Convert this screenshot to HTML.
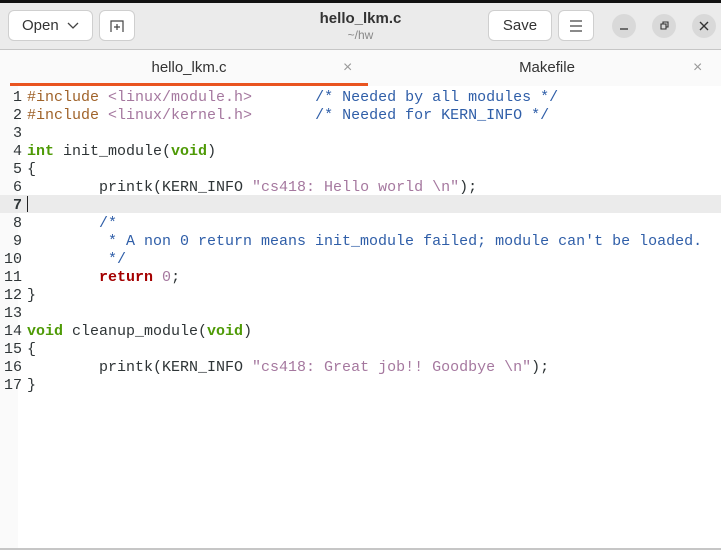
<!DOCTYPE html>
<html><head><style>
body{margin:0;width:721px;height:550px;overflow:hidden;background:#fff;font-family:"Liberation Sans",sans-serif;position:relative}
.top{position:absolute;left:0;top:0;width:721px;height:3px;background:#111}
.hdr{position:absolute;left:0;top:3px;width:721px;height:46px;background:#ebebeb;border-bottom:1px solid #c6c6c6}
.btn{position:absolute;top:7px;height:31px;background:#fff;border:1px solid #cfcfcf;border-radius:6px;box-sizing:border-box;font-size:15px;color:#333;display:flex;align-items:center;justify-content:center}
.circ{position:absolute;top:11px;width:24px;height:24px;border-radius:50%;background:#d9d9d9;display:flex;align-items:center;justify-content:center;color:#333;font-size:13px}
.tabs{position:absolute;left:0;top:50px;width:721px;height:36px;background:#fafafa}
.tab{position:absolute;top:0;height:36px;line-height:36px;font-size:15px;color:#333;text-align:center}
.x{position:absolute;top:0;line-height:36px;color:#999;font-size:16px}
.gut{position:absolute;left:0;top:86px;width:18px;height:463px;background:#fafafa}
.hl{position:absolute;left:0;top:195px;width:721px;height:18px;background:#ebebeb}
.code{position:absolute;left:0;top:89px;font-family:"Liberation Mono",monospace;font-size:15px;line-height:18px;color:#2e3436;white-space:pre}
.ln{display:inline-block;width:22px;text-align:right;margin-right:5px}
.pp{color:#a0632a}.s{color:#a5789f}.c{color:#2f5ea8}.t{color:#4e9a06;font-weight:bold}.k{color:#a40000;font-weight:bold}
.bot{position:absolute;left:0;top:548px;width:721px;height:2px;background:#c6c6c6}
</style></head><body>
<div class="top"></div>
<div class="hdr">
<div class="btn" style="left:8px;width:85px">Open&nbsp;&nbsp;<svg width="12" height="8"><path d="M1 1l5 5 5-5" fill="none" stroke="#444" stroke-width="1.3"/></svg></div>
<div class="btn" style="left:99px;width:36px"><svg width="16" height="14"><path d="M2 13V2h12v11M8 5v6M5 8h6" fill="none" stroke="#444" stroke-width="1.2"/></svg></div>
<div style="position:absolute;left:0;width:721px;top:7px;text-align:center;font-size:15px;font-weight:bold;color:#333">hello_lkm.c</div>
<div style="position:absolute;left:0;width:721px;top:25px;text-align:center;font-size:12px;color:#888">~/hw</div>
<div class="btn" style="left:488px;width:64px">Save</div>
<div class="btn" style="left:558px;width:36px"><svg width="14" height="12"><path d="M1 1h12M1 6h12M1 11h12" stroke="#444" stroke-width="1.2"/></svg></div>
<div class="circ" style="left:612px"><svg width="10" height="10"><path d="M1 8h8" stroke="#333" stroke-width="1.3"/></svg></div>
<div class="circ" style="left:652px"><svg width="10" height="10"><path d="M2 3h5v5H2zM4 3V1h5v5H7" fill="none" stroke="#333" stroke-width="1.1"/></svg></div>
<div class="circ" style="left:692px"><svg width="10" height="10"><path d="M1 1l8 8M9 1l-8 8" stroke="#333" stroke-width="1.4"/></svg></div>
</div>
<div class="tabs">
<div class="tab" style="left:10px;width:358px">hello_lkm.c</div>
<div class="x" style="left:343px">×</div>
<div style="position:absolute;left:10px;top:33px;width:358px;height:3px;background:#e95420"></div>
<div class="tab" style="left:368px;width:358px">Makefile</div>
<div class="x" style="left:693px">×</div>
</div>
<div class="gut"></div>
<div class="hl"></div>
<div style="position:absolute;left:27px;top:196px;width:1px;height:16px;background:#222"></div>
<div class="code"><span class="ln">1</span><span class="pp">#include</span> <span class="s">&lt;linux/module.h&gt;</span>       <span class="c">/* Needed by all modules */</span>
<span class="ln">2</span><span class="pp">#include</span> <span class="s">&lt;linux/kernel.h&gt;</span>       <span class="c">/* Needed for KERN_INFO */</span>
<span class="ln">3</span>
<span class="ln">4</span><span class="t">int</span> init_module(<span class="t">void</span>)
<span class="ln">5</span>{
<span class="ln">6</span>        printk(KERN_INFO <span class="s">"cs418: Hello world \n"</span>);
<span class="ln"><b>7</b></span>
<span class="ln">8</span>        <span class="c">/*</span>
<span class="ln">9</span><span class="c">         * A non 0 return means init_module failed; module can't be loaded.</span>
<span class="ln">10</span><span class="c">         */</span>
<span class="ln">11</span>        <span class="k">return</span> <span class="s">0</span>;
<span class="ln">12</span>}
<span class="ln">13</span>
<span class="ln">14</span><span class="t">void</span> cleanup_module(<span class="t">void</span>)
<span class="ln">15</span>{
<span class="ln">16</span>        printk(KERN_INFO <span class="s">"cs418: Great job!! Goodbye \n"</span>);
<span class="ln">17</span>}</div>
<div class="bot"></div>
</body></html>
